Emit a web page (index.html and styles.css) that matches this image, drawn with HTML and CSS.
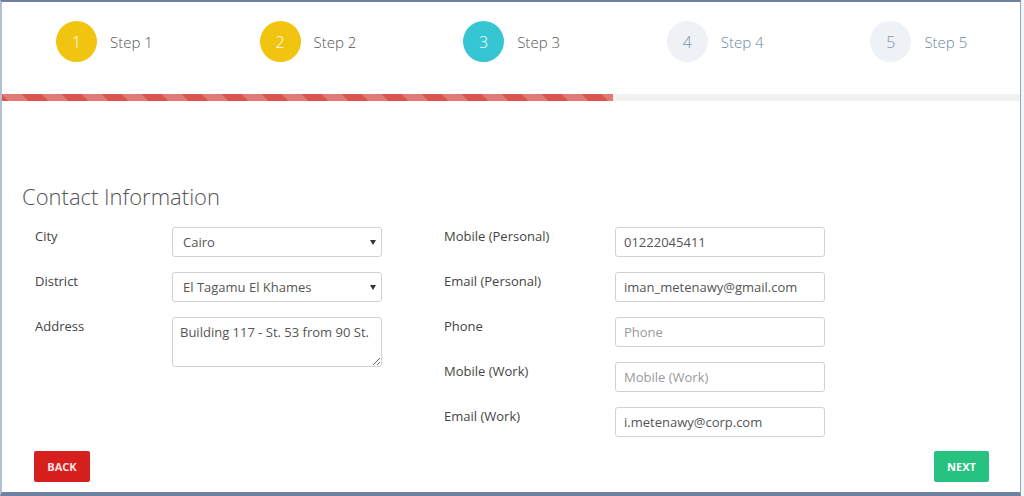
FILE: index.html
```html
<!DOCTYPE html>
<html lang="en">
<head>
<meta charset="utf-8">
<title>Contact Information</title>
<link rel="stylesheet" href="styles.css">
</head>
<body>
<div class="frame">
  <div class="steps">
    <div class="step done"><span class="num">1</span><span class="label">Step 1</span></div>
    <div class="step done"><span class="num">2</span><span class="label">Step 2</span></div>
    <div class="step active"><span class="num">3</span><span class="label">Step 3</span></div>
    <div class="step todo"><span class="num">4</span><span class="label">Step 4</span></div>
    <div class="step todo"><span class="num">5</span><span class="label">Step 5</span></div>
  </div>
  <div class="progress"><div class="progress-bar" style="width: 60%"></div></div>

  <h3 class="title">Contact Information</h3>

  <div class="form">
    <div class="col col-left">
      <div class="row">
        <label class="lbl">City</label>
        <span class="select"><select class="ctl"><option>Cairo</option></select></span>
      </div>
      <div class="row">
        <label class="lbl">District</label>
        <span class="select"><select class="ctl"><option>El Tagamu El Khames</option></select></span>
      </div>
      <div class="row">
        <label class="lbl">Address</label>
        <textarea class="ctl area">Building 117 - St. 53 from 90 St.</textarea>
      </div>
    </div>
    <div class="col col-right">
      <div class="row">
        <label class="lbl">Mobile (Personal)</label>
        <input class="ctl" type="text" value="01222045411">
      </div>
      <div class="row">
        <label class="lbl">Email (Personal)</label>
        <input class="ctl" type="text" value="iman_metenawy@gmail.com">
      </div>
      <div class="row">
        <label class="lbl">Phone</label>
        <input class="ctl" type="text" placeholder="Phone">
      </div>
      <div class="row">
        <label class="lbl">Mobile (Work)</label>
        <input class="ctl" type="text" placeholder="Mobile (Work)">
      </div>
      <div class="row">
        <label class="lbl">Email (Work)</label>
        <input class="ctl" type="text" value="i.metenawy@corp.com">
      </div>
    </div>
  </div>

  <div class="actions">
    <button class="btn btn-back">BACK</button>
    <button class="btn btn-next">NEXT</button>
  </div>
</div>
</body>
</html>
```

FILE: styles.css
```css
* { box-sizing: border-box; }

html, body {
  margin: 0;
  padding: 0;
}

body {
  width: 1024px;
  height: 496px;
  background: #f3f4f6;
  font-family: "Open Sans", "Liberation Sans", sans-serif;
  overflow: hidden;
}

.frame {
  width: 1021px;
  height: 496px;
  background: #ffffff;
  border-top: 2px solid #6e81a0;
  border-left: 2px solid #b3bfcf;
  border-right: 1px solid #98a7bd;
  border-bottom: 4px solid #6e81a0;
  display: flex;
  flex-direction: column;
}

/* Steps */
.steps {
  display: grid;
  grid-template-columns: repeat(5, 1fr);
  height: 92px;
  padding-top: 19px;
}

.step {
  display: flex;
  align-items: center;
  height: 41px;
  padding-left: 54px;
}

.num {
  width: 41px;
  height: 41px;
  border-radius: 50%;
  display: flex;
  align-items: center;
  justify-content: center;
  font-size: 16px;
  font-weight: 300;
  color: #ffffff;
  flex: none;
}

.label {
  margin-left: 13px;
  font-size: 15px;
  font-weight: 300;
  color: #555555;
}

.done .num { background: #f1c40f; }
.active .num { background: #36c6d3; }
.todo .num { background: #eef1f5; color: #7f95ab; }
.todo .label { color: #6787a6; }

/* Progress */
.progress {
  height: 7px;
  background: #f1f1f1;
  flex: none;
}

.progress-bar {
  height: 100%;
  background-color: #d9534f;
  background-image: linear-gradient(45deg,
    rgba(255,255,255,.22) 25%, transparent 25%,
    transparent 50%, rgba(255,255,255,.22) 50%,
    rgba(255,255,255,.22) 75%, transparent 75%, transparent);
  background-size: 40px 40px;
}

/* Title */
.title {
  margin: 82px 0 0 20px;
  font-size: 22px;
  line-height: 26px;
  font-weight: 300;
  color: #555555;
}

/* Form */
.form {
  display: flex;
  margin-top: 18px;
  padding-left: 33px;
}

.col {
  display: flex;
  flex-direction: column;
  gap: 15px;
}

.col-left { width: 409px; }

.row {
  display: flex;
  align-items: flex-start;
}

.col-left .lbl { width: 137px; }
.col-right .lbl { width: 171px; }

.lbl {
  font-size: 13px;
  line-height: 19px;
  color: #444444;
  flex: none;
}

.ctl {
  width: 210px;
  height: 30px;
  border: 1px solid #d2d2d2;
  border-radius: 3px;
  background: #ffffff;
  font-family: "Open Sans", "Liberation Sans", sans-serif;
  font-size: 13px;
  color: #555555;
  padding: 0 8px;
  outline: none;
  margin: 0;
}

.ctl::placeholder { color: #9a9a9a; }

.select {
  position: relative;
  display: block;
  width: 210px;
  height: 30px;
}

.select .ctl {
  -webkit-appearance: none;
  appearance: none;
  padding: 0 10px;
}

.select::after {
  content: "";
  position: absolute;
  right: 6px;
  top: 13px;
  border-left: 3px solid transparent;
  border-right: 3px solid transparent;
  border-top: 5px solid #333333;
  pointer-events: none;
}

.area {
  height: 50px;
  padding: 5px 7px;
  line-height: 18px;
  resize: vertical;
  font-family: "Open Sans", "Liberation Sans", sans-serif;
}

/* Buttons */
.actions {
  display: flex;
  justify-content: space-between;
  margin-top: 14px;
  padding: 0 31px 0 32px;
}

.btn {
  height: 31px;
  border: none;
  border-radius: 2px;
  font-family: "Open Sans", "Liberation Sans", sans-serif;
  font-size: 11px;
  font-weight: 700;
  color: #ffffff;
  padding: 0;
  cursor: pointer;
}

.btn-back {
  width: 56px;
  background: #d6201e;
  color: #f7e3e3;
}

.btn-next {
  width: 55px;
  background: #26c281;
}
```
